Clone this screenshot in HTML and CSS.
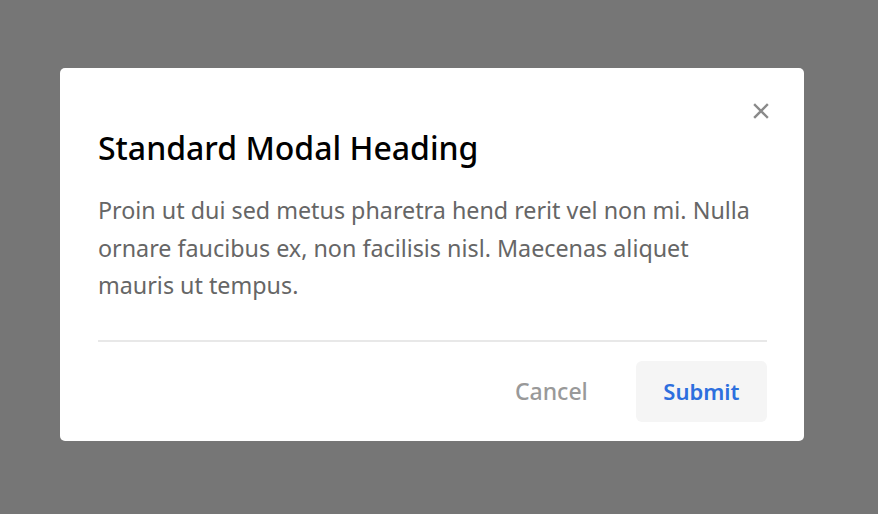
FILE: index.html
```html
<!DOCTYPE html>
<html>
<head>
<meta charset="utf-8">
<link rel="stylesheet" href="styles.css">
</head>
<body>
<div class="overlay">
  <div class="modal">
    <button class="close" aria-label="Close">
      <svg width="16" height="16" viewBox="0 0 16 16"><path d="M2 2L14 14M14 2L2 14" stroke="#8a8a8a" stroke-width="2.4" stroke-linecap="square" fill="none"/></svg>
    </button>
    <h2 class="title">Standard Modal Heading</h2>
    <div class="content">
      <p class="body">Proin ut dui sed metus pharetra hend rerit vel non mi. Nulla ornare faucibus ex, non facilisis nisl. Maecenas aliquet mauris ut tempus.</p>
    </div>
    <div class="footer">
      <button class="btn cancel">Cancel</button>
      <button class="btn submit">Submit</button>
    </div>
  </div>
</div>
</body>
</html>
```
FILE: styles.css
```css
html, body {
  margin: 0;
  height: 100%;
}
body {
  background: #767676;
  font-family: "Noto Sans", "Open Sans", sans-serif;
}
.overlay {
  padding: 68px 0 0 60px;
}
.modal {
  position: relative;
  width: 744px;
  height: 373px;
  box-sizing: border-box;
  background: #fff;
  border-radius: 5px;
  padding: 60px 37px 19px 38px;
}
.close {
  position: absolute;
  right: 35px;
  top: 35px;
  border: 0;
  background: none;
  padding: 0;
  width: 16px;
  height: 16px;
  cursor: pointer;
}
.close svg { display: block; }
.title {
  margin: 0;
  font-size: 32px;
  font-weight: 500;
  color: #000;
  line-height: 40px;
}
.content {
  margin-top: 24px;
  padding-bottom: 35px;
  border-bottom: 2px solid #e8e8e8;
}
.body {
  margin: 0;
  max-width: 665px;
  font-size: 23.3px;
  line-height: 37.5px;
  color: #666;
}
.footer {
  display: flex;
  justify-content: flex-end;
  gap: 24px;
  margin-top: 19px;
}
.btn {
  font-family: inherit;
  font-size: 22px;
  border: 0;
  border-radius: 6px;
  height: 61px;
  padding: 0 26px;
  cursor: pointer;
  background: none;
}
.cancel {
  color: #999;
  font-size: 23px;
  font-weight: 500;
  padding: 0 24px;
}
.submit {
  color: #2d6fde;
  background: #f5f5f5;
  font-weight: 600;
  padding: 0 27.5px;
}
```
